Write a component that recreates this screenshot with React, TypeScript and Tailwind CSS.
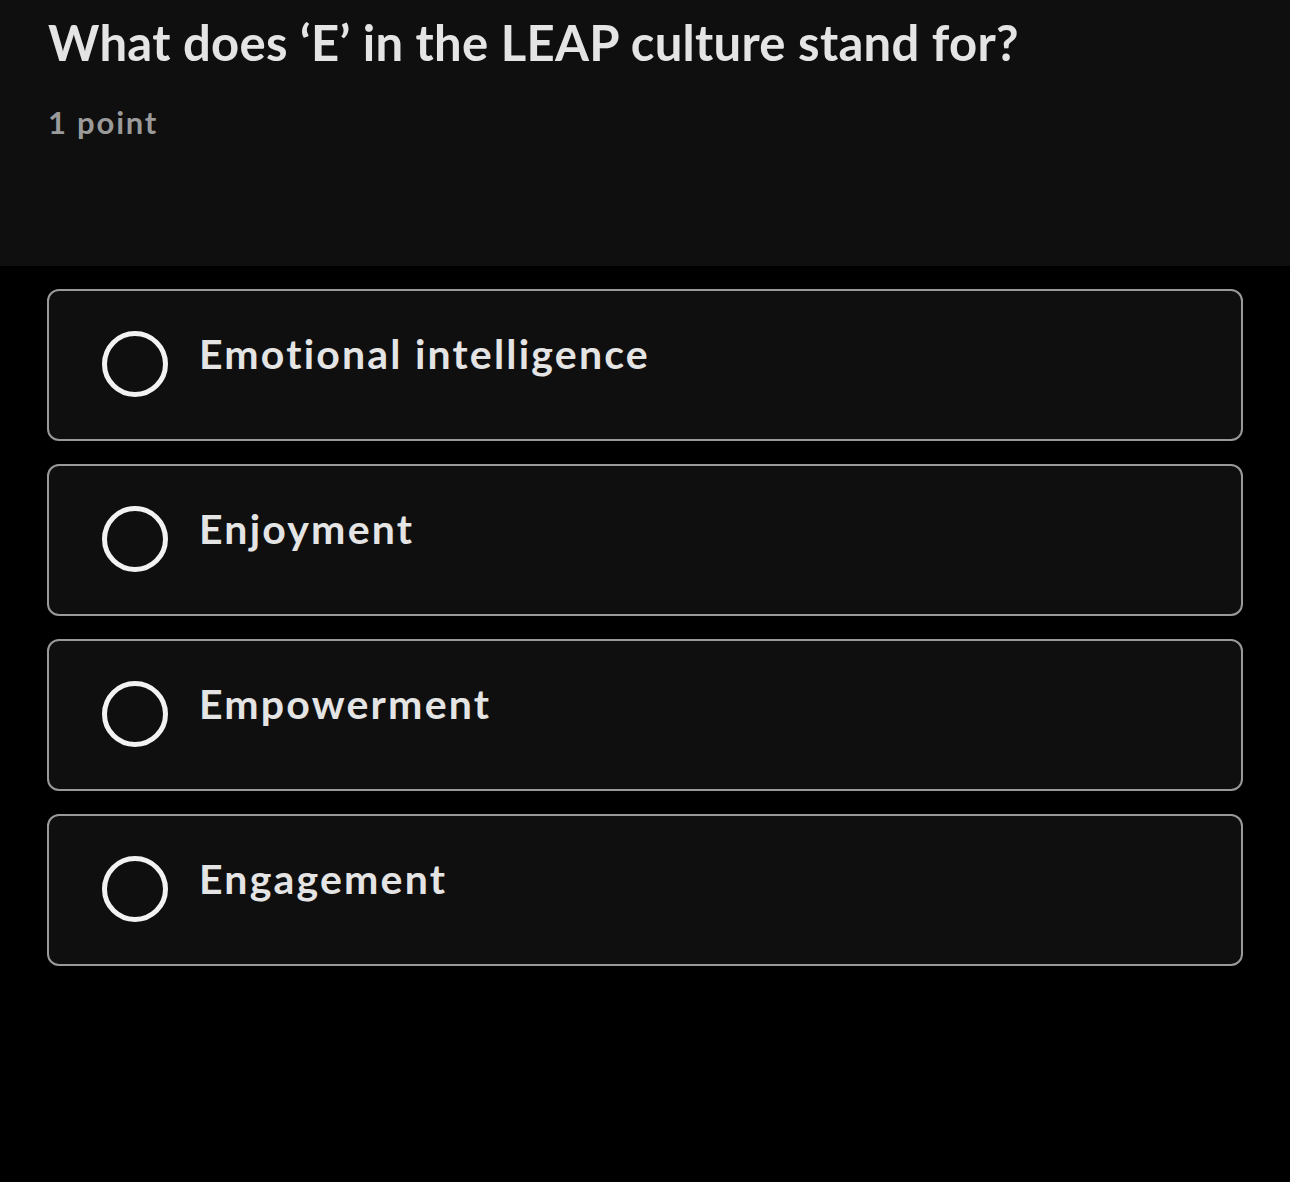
import React from "react";

const options = ["Emotional intelligence", "Enjoyment", "Empowerment", "Engagement"];

function Radio() {
  return (
    <svg width="66" height="66" viewBox="0 0 66 66" className="shrink-0 mt-[1px]">
      <circle cx="33" cy="33" r="30.5" fill="none" stroke="#f2f2f2" strokeWidth="5" />
    </svg>
  );
}

export default function App() {
  return (
    <div
      className="min-h-[1182px] w-full bg-black [font-variant-ligatures:none]"
      style={{ fontFamily: "Lato, 'Noto Sans', sans-serif" }}
    >
      <div className="h-[266px] bg-[#0f0f0f] pl-[48px] pt-[12px]">
        <h1 className="text-[49px] leading-[60px] font-bold tracking-[0.3px] text-[#e4e4e4]">
          What does ‘E’ in the LEAP culture stand for?
        </h1>
        <div className="mt-[30px] text-[31px] leading-[40px] font-bold tracking-[1.8px] text-[#9a9a9a]">1 point</div>
      </div>
      <div className="flex flex-col gap-[23px] px-[47px] pt-[23px]">
        {options.map((o) => (
          <div
            key={o}
            className="h-[152px] rounded-[12px] border-[2.5px] border-[#999999] bg-[#0f0f0f] flex items-start pl-[53px] pt-[39px] gap-[31px]"
          >
            <Radio />
            <span className="text-[41px] leading-[48px] font-bold tracking-[2.2px] text-[#e4e4e4]">{o}</span>
          </div>
        ))}
      </div>
    </div>
  );
}
